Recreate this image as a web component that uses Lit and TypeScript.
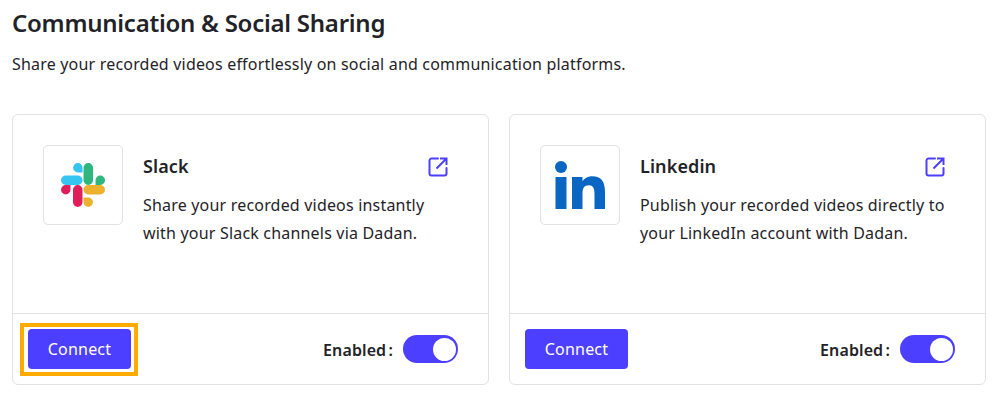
import { LitElement, html, css, svg } from "lit";
import { customElement } from "lit/decorators.js";

const slack = svg`<svg viewBox="0 0 46.500 46.500" width="44" height="44" aria-hidden="true">
  <path fill="#36C5F0" d="M17.800 0a5 5 0 0 0 0 10h5V5a5 5 0 0 0-5-5zM17.800 13.200H5a5 5 0 0 0 0 10h12.800a5 5 0 0 0 0-10z"/>
  <path fill="#2EB67D" d="M46.500 18.200a5 5 0 0 0-10 0v5h5a5 5 0 0 0 5-5zM33.800 18.200V5a5 5 0 0 0-10 0v13.200a5 5 0 0 0 10 0z"/>
  <path fill="#ECB22E" d="M28.800 46.500a5 5 0 0 0 0-10h-5v5a5 5 0 0 0 5 5zM28.800 33.300h12.700a5 5 0 0 0 0-10H28.800a5 5 0 0 0 0 10z"/>
  <path fill="#E01E5A" d="M0 28.300a5 5 0 0 0 10 0v-5H5a5 5 0 0 0-5 5zM12.700 28.300v13.200a5 5 0 0 0 10 0V28.300a5 5 0 0 0-10 0z"/>
</svg>`;

const linkedin = svg`<svg viewBox="0 0 50 48" width="50" height="48" aria-hidden="true">
  <circle cx="6" cy="6" r="6" fill="#0A66C2"/>
  <rect x="0.500" y="16" width="11" height="32" fill="#0A66C2"/>
  <path fill="#0A66C2" d="M17 16h10.500v4.500C29.200 17.500 33 15.300 37 15.300 46.500 15.300 50 21 50 31v17H39.500V33C39.500 27.500 38 24.300 33.800 24.300 29 24.300 27.500 27.700 27.500 33V48H17z"/>
</svg>`;

const ext = svg`<svg viewBox="0 0 20 20" width="20" height="20" fill="none" stroke="#4D3FFF" stroke-width="2" aria-hidden="true">
  <path d="M10 1.500H3.500a2 2 0 0 0-2 2v13a2 2 0 0 0 2 2h13a2 2 0 0 0 2-2V11" stroke-linecap="round"/>
  <path d="M8.500 11.500 18 2M12 1.500h6.500V8"/>
</svg>`;

@customElement("app-root")
export class AppRoot extends LitElement {
  static styles = css`
    :host {
      display: block;
      width: 996px;
      height: 407px;
      box-sizing: border-box;
      padding: 0 10px 0 12px;
      overflow: hidden;
      background: #fff;
      font-family: "Noto Sans", sans-serif;
      color: #1f2328;
    }
    h1 {
      margin: 0;
      padding-top: 7px;
      font-size: 24px;
      line-height: 32px;
      font-weight: 600;
      letter-spacing: -0.25px;
    }
    .sub {
      margin: 13px 0 0;
      font-size: 16px;
      line-height: 24px;
      letter-spacing: 0.19px;
    }
    .grid {
      display: grid;
      grid-template-columns: 477px 477px;
      gap: 20px;
      margin-top: 38px;
    }
    .card {
      height: 271px;
      box-sizing: border-box;
      border: 1px solid #e2e2e2;
      border-radius: 6px;
      display: flex;
      flex-direction: column;
    }
    .body {
      flex: 1;
      display: flex;
      gap: 20px;
      padding: 30px 30px 0;
    }
    .logo {
      flex: none;
      width: 80px;
      height: 80px;
      box-sizing: border-box;
      border: 1px solid #e2e2e2;
      border-radius: 5px;
      display: flex;
      align-items: center;
      justify-content: center;
    }
    .text { flex: 1; }
    .head {
      display: flex;
      align-items: center;
      justify-content: space-between;
      height: 43px;
      padding-right: 10px;
    }
    .name {
      font-size: 18px;
      font-weight: 600;
      letter-spacing: 0.1px;
      margin-bottom: 2px;
    }
    .desc {
      margin: 3px 0 0;
      font-size: 16px;
      line-height: 28px;
      letter-spacing: 0.19px;
    }
    .foot {
      height: 71px;
      box-sizing: border-box;
      border-top: 1px solid #e2e2e2;
      display: flex;
      align-items: center;
      justify-content: space-between;
      padding: 0 30px 0 15px;
    }
    .btn-wrap {
      position: relative;
      display: flex;
    }
    button {
      width: 103px;
      height: 40px;
      border: 0;
      border-radius: 4px;
      background: #4d3fff;
      color: #fff;
      font: 400 16px "Noto Sans", sans-serif;
      letter-spacing: 0.2px;
    }
    .mark {
      position: absolute;
      left: -8px;
      right: -7px;
      top: -6px;
      bottom: -7px;
      border: 4px solid #ffab00;
    }
    .status {
      display: flex;
      align-items: center;
      gap: 10px;
      font-size: 16px;
      font-weight: 600;
      letter-spacing: 0.1px;
      word-spacing: -2px;
    }
    .status span { margin-top: 2px; }
    .toggle {
      width: 55px;
      height: 28px;
      box-sizing: border-box;
      padding: 0 2px;
      border-radius: 14px;
      background: #4d3fff;
      display: flex;
      align-items: center;
      justify-content: flex-end;
    }
    .knob {
      width: 23px;
      height: 23px;
      border-radius: 50%;
      background: #fff;
    }
  `;

  private card(name: string, logo: unknown, l1: string, focus: boolean) {
    return html`<div class="card">
      <div class="body">
        <div class="logo">${logo}</div>
        <div class="text">
          <div class="head"><span class="name">${name}</span>${ext}</div>
          <p class="desc">${l1}</p>
        </div>
      </div>
      <div class="foot">
        <div class="btn-wrap"><button>Connect</button>${focus ? html`<div class="mark"></div>` : ""}</div>
        <div class="status"><span>Enabled :</span><div class="toggle"><div class="knob"></div></div></div>
      </div>
    </div>`;
  }

  render() {
    return html`
      <h1>Communication &amp; Social Sharing</h1>
      <p class="sub">Share your recorded videos effortlessly on social and communication platforms.</p>
      <div class="grid">
        ${this.card("Slack", slack, "Share your recorded videos instantly with your Slack channels via Dadan.", true)}
        ${this.card("Linkedin", linkedin, "Publish your recorded videos directly to your LinkedIn account with Dadan.", false)}
      </div>
    `;
  }
}
